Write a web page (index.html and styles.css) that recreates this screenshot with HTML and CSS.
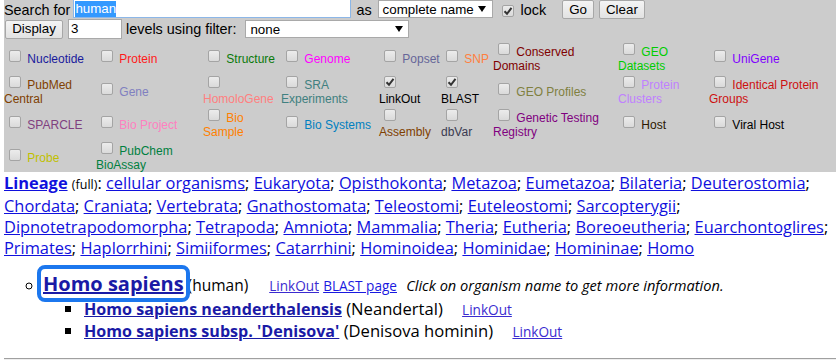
FILE: index.html
```html
<!DOCTYPE html>
<html>
<head>
<meta charset="utf-8">
<title>Taxonomy browser</title>
<link rel="stylesheet" href="styles.css">
</head>
<body>
<form class="panel">
  <div class="row row-search">
    <span class="lbl lbl-search">Search for</span>
    <div class="textbox tb-search"><span class="hl">human</span></div>
    <span class="lbl lbl-as">as</span>
    <div class="select sel-name"><span>complete name</span><svg class="arrow" width="8" height="6" viewBox="0 0 8 6"><polygon points="0,0 8,0 4,6" fill="#000"/></svg></div>
    <span class="cb on cb-lock"><svg width="12" height="12" viewBox="0 0 12 12"><path d="M2.5 6.2 L5 8.8 L9.5 2.8" fill="none" stroke="#333" stroke-width="2"/></svg></span><span class="lbl lbl-lock">lock</span>
    <button class="btn btn-go" type="button">Go</button>
    <button class="btn btn-clear" type="button">Clear</button>
  </div>
  <div class="row row-display">
    <button class="btn btn-display" type="button">Display</button>
    <div class="textbox tb-levels">3</div>
    <span class="lbl lbl-levels">levels using filter:</span>
    <div class="select sel-filter"><span>none</span><svg class="arrow" width="8" height="6" viewBox="0 0 8 6"><polygon points="0,0 8,0 4,6" fill="#000"/></svg></div>
  </div>
  <table class="dbs">
    <colgroup><col><col><col><col><col><col><col><col><col></colgroup>
    <tr>
      <td><span class="cb"></span> <span class="d-nuc">Nucleotide</span></td>
      <td><span class="cb"></span> <span class="d-prot">Protein</span></td>
      <td><span class="cb"></span> <span class="d-struct">Structure</span></td>
      <td><span class="cb"></span> <span class="d-genome">Genome</span></td>
      <td><span class="cb"></span> <span class="d-popset">Popset</span></td>
      <td><span class="cb"></span> <span class="d-snp">SNP</span></td>
      <td><span class="cb"></span> <span class="d-cdd">Conserved Domains</span></td>
      <td><span class="cb"></span> <span class="d-gds">GEO Datasets</span></td>
      <td><span class="cb"></span> <span class="d-unigene">UniGene</span></td>
    </tr>
    <tr>
      <td><span class="cb"></span> <span class="d-pmc">PubMed Central</span></td>
      <td><span class="cb"></span> <span class="d-gene">Gene</span></td>
      <td><span class="cb"></span> <span class="d-homolo">HomoloGene</span></td>
      <td><span class="cb"></span> <span class="d-sra">SRA Experiments</span></td>
      <td><span class="cb on"><svg width="12" height="12" viewBox="0 0 12 12"><path d="M2.5 6.2 L5 8.8 L9.5 2.8" fill="none" stroke="#333" stroke-width="2"/></svg></span> <span class="d-black">LinkOut</span></td>
      <td><span class="cb on"><svg width="12" height="12" viewBox="0 0 12 12"><path d="M2.5 6.2 L5 8.8 L9.5 2.8" fill="none" stroke="#333" stroke-width="2"/></svg></span> <span class="d-black">BLAST</span></td>
      <td><span class="cb"></span> <span class="d-geop">GEO Profiles</span></td>
      <td><span class="cb"></span> <span class="d-pclust">Protein Clusters</span></td>
      <td><span class="cb"></span> <span class="d-ipg">Identical Protein Groups</span></td>
    </tr>
    <tr>
      <td><span class="cb"></span> <span class="d-sparcle">SPARCLE</span></td>
      <td><span class="cb"></span> <span class="d-bioproj">Bio Project</span></td>
      <td><span class="cb"></span> <span class="d-biosamp">Bio Sample</span></td>
      <td><span class="cb"></span> <span class="d-biosys">Bio Systems</span></td>
      <td><span class="cb"></span> <span class="d-assembly">Assembly</span></td>
      <td><span class="cb"></span> <span class="d-dbvar">dbVar</span></td>
      <td><span class="cb"></span> <span class="d-gtr">Genetic Testing Registry</span></td>
      <td><span class="cb"></span> <span class="d-host">Host</span></td>
      <td><span class="cb"></span> <span class="d-black">Viral Host</span></td>
    </tr>
    <tr>
      <td><span class="cb"></span> <span class="d-probe">Probe</span></td>
      <td><span class="cb"></span> <span class="d-pcassay">PubChem BioAssay</span></td>
      <td></td><td></td><td></td><td></td><td></td><td></td><td></td>
    </tr>
  </table>
</form>

<p class="lineage"><a class="lin-head" href="#">Lineage</a> <span class="full">(full)</span>: <a href="#">cellular organisms</a>; <a href="#">Eukaryota</a>; <a href="#">Opisthokonta</a>; <a href="#">Metazoa</a>; <a href="#">Eumetazoa</a>; <a href="#">Bilateria</a>; <a href="#">Deuterostomia</a>; <a href="#">Chordata</a>; <a href="#">Craniata</a>; <a href="#">Vertebrata</a>; <a href="#">Gnathostomata</a>; <a href="#">Teleostomi</a>; <a href="#">Euteleostomi</a>; <a href="#">Sarcopterygii</a>; <a href="#">Dipnotetrapodomorpha</a>; <a href="#">Tetrapoda</a>; <a href="#">Amniota</a>; <a href="#">Mammalia</a>; <a href="#">Theria</a>; <a href="#">Eutheria</a>; <a href="#">Boreoeutheria</a>; <a href="#">Euarchontoglires</a>; <a href="#">Primates</a>; <a href="#">Haplorrhini</a>; <a href="#">Simiiformes</a>; <a href="#">Catarrhini</a>; <a href="#">Hominoidea</a>; <a href="#">Hominidae</a>; <a href="#">Homininae</a>; <a href="#">Homo</a></p>

<ul class="tax">
  <li><a class="sp-main" href="#">Homo sapiens</a><span class="common">(human)</span><a class="small-link lo-main" href="#">LinkOut</a> <a class="small-link blast" href="#">BLAST page</a> <em class="hint">Click on organism name to get more information.</em>
    <ul class="sub">
      <li><a class="sp" href="#">Homo sapiens neanderthalensis</a> (Neandertal) <a class="small-link lo" href="#">LinkOut</a></li>
      <li><a class="sp" href="#">Homo sapiens subsp. 'Denisova'</a> (Denisova hominin) <a class="small-link lo" href="#">LinkOut</a></li>
    </ul>
  </li>
</ul>
<hr class="rule">
</body>
</html>
```

FILE: styles.css
```css
html, body {
  margin: 0;
  padding: 0;
  background: #fff;
}
body {
  margin-left: 4px;
  font-family: "Open Sans", "Noto Sans", sans-serif;
  color: #000;
  overflow: hidden;
}

/* ---------- top grey form ---------- */
.panel {
  background: #cccccc;
  height: 172px;
  margin: 0;
  font-family: "Liberation Sans", Arial, sans-serif;
}
.row {
  display: flex;
  align-items: center;
}
.row-search {
  height: 19px;
}
.row-display {
  height: 20px;
}
.lbl {
  font-size: 14.4px;
  line-height: 16px;
  color: #000;
  white-space: nowrap;
}
.textbox {
  box-sizing: border-box;
  background: #fff;
  border: 1px solid #a9a9a9;
  font-size: 13.33px;
  line-height: 16px;
  padding: 0 1px;
  display: flex;
  align-items: center;
}
.tb-search {
  width: 278px;
  height: 19px;
  margin-left: 3px;
  margin-top: -2px;
  border-color: #8cb7e8;
  border-top-color: transparent;
}
.hl {
  background: #3399ff;
  color: #fff;
}
.lbl-as { margin-left: 5px; }
.select {
  box-sizing: border-box;
  background: #fff;
  border: 1px solid #a9a9a9;
  font-size: 13.33px;
  display: flex;
  align-items: center;
  justify-content: space-between;
  padding: 0 6px 0 4px;
}
.sel-name {
  width: 115px;
  height: 18px;
  margin-left: 6px;
  margin-top: -1px;
}
.arrow { display: block; }
.cb-lock { margin-left: 9px !important; }
.lbl-lock { margin-left: 4px; }
.btn {
  box-sizing: border-box;
  font-family: "Liberation Sans", Arial, sans-serif;
  font-size: 13.33px;
  color: #000;
  background: linear-gradient(#f4f4f4, #e2e2e2);
  border: 1px solid #a7a7a7;
  border-radius: 2px;
  padding: 0 6px;
  height: 19px;
  line-height: 16px;
}
.btn-go { margin-left: 16px; }
.btn-clear { margin-left: 5px; }
.btn-display {
  margin-left: 1px;
  width: 58px;
  padding: 0;
}
.tb-levels {
  width: 54px;
  height: 20px;
  margin-left: 5px;
  padding-left: 2px;
}
.lbl-levels { margin-left: 4px; }
.sel-filter {
  width: 164px;
  height: 18px;
  margin-left: 9px;
  padding-right: 5px;
}

/* ---------- database checkboxes ---------- */
.dbs {
  table-layout: fixed;
  width: 832px;
  border-collapse: separate;
  border-spacing: 0;
  margin-top: 1px;
  font-size: 12px;
}
.dbs td {
  padding: 0;
  line-height: 14px;
  vertical-align: middle;
}
.dbs col:nth-child(1) { width: 92px; }
.dbs col:nth-child(2) { width: 107px; }
.dbs col:nth-child(3) { width: 78px; }
.dbs col:nth-child(4) { width: 98px; }
.dbs col:nth-child(5) { width: 62px; }
.dbs col:nth-child(6) { width: 52px; }
.dbs col:nth-child(7) { width: 125px; }
.dbs col:nth-child(8) { width: 91px; }
.dbs col:nth-child(9) { width: 127px; }

.cb {
  display: inline-block;
  box-sizing: border-box;
  width: 12px;
  height: 12px;
  margin: 3px 3px 1px 5px;
  border: 1px solid #a4a4a4;
  border-radius: 2px;
  background: linear-gradient(#ececec, #dadada);
  vertical-align: baseline;
  position: relative;
}
.cb svg {
  position: absolute;
  left: -1px;
  top: -1px;
}

.d-nuc { color: #1a1a9c; }
.d-prot { color: #ff1a1a; }
.d-struct { color: #0a7a0a; }
.d-genome { color: #ff00ff; }
.d-popset { color: #666699; }
.d-snp { color: #ff8040; }
.d-cdd { color: #800000; }
.d-gds { color: #00cc00; }
.d-unigene { color: #8000ff; }
.d-pmc { color: #804000; }
.d-gene { color: #8080c0; }
.d-homolo { color: #ff8080; }
.d-sra { color: #408080; }
.d-black { color: #000; }
.d-geop { color: #808040; }
.d-pclust { color: #c080ff; }
.d-ipg { color: #cc1010; }
.d-sparcle { color: #804080; }
.d-bioproj { color: #ff80c0; }
.d-biosamp { color: #ff8000; }
.d-biosys { color: #0080c0; }
.d-assembly { color: #804000; }
.d-dbvar { color: #3a3a50; }
.d-gtr { color: #800080; }
.d-host { color: #2a1800; }
.d-probe { color: #c0c000; }
.d-pcassay { color: #008040; }

/* ---------- lineage ---------- */
.lineage {
  margin: 0 4px 0 0;
  font-size: 16.4px;
  line-height: 21px;
}
.lineage a {
  color: #1010dd;
}
.lin-head {
  font-weight: bold;
  font-size: 16.4px;
}
.full {
  font-size: 12.5px;
}

/* ---------- taxonomy tree ---------- */
.tax {
  margin: 13px 0 0;
  padding-left: 40px;
  list-style: circle;
  font-size: 16px;
  line-height: 21px;
}
.sp-main {
  font-size: 20px;
  font-weight: bold;
  color: #1a1aa6;
  line-height: 25px;
  outline: 4px solid #1c77ee;
  outline-offset: 1px;
  border-radius: 3px;
  padding: 0 1px;
  margin-left: -2px;
}
.common {
  margin-left: 3px;
  font-size: 15.5px;
}
.small-link {
  font-size: 13.6px;
  color: #3b2bd0;
}
.lo-main { margin-left: 21px; }
.blast { color: #1a1ae0; }
.hint {
  font-size: 14.6px;
  margin-left: 5px;
}
.sub {
  margin: 2px 0 0;
  padding-left: 40px;
  list-style: square;
  font-size: 16.6px;
}
.sp {
  font-weight: bold;
  font-size: 16.1px;
  color: #1a1aa6;
}
.lo { margin-left: 15px; }

.rule {
  margin: 16px 0 0;
  border: 0;
  border-top: 1px solid #a0a0a0;
  border-bottom: 1px solid #eeeeee;
}
```
